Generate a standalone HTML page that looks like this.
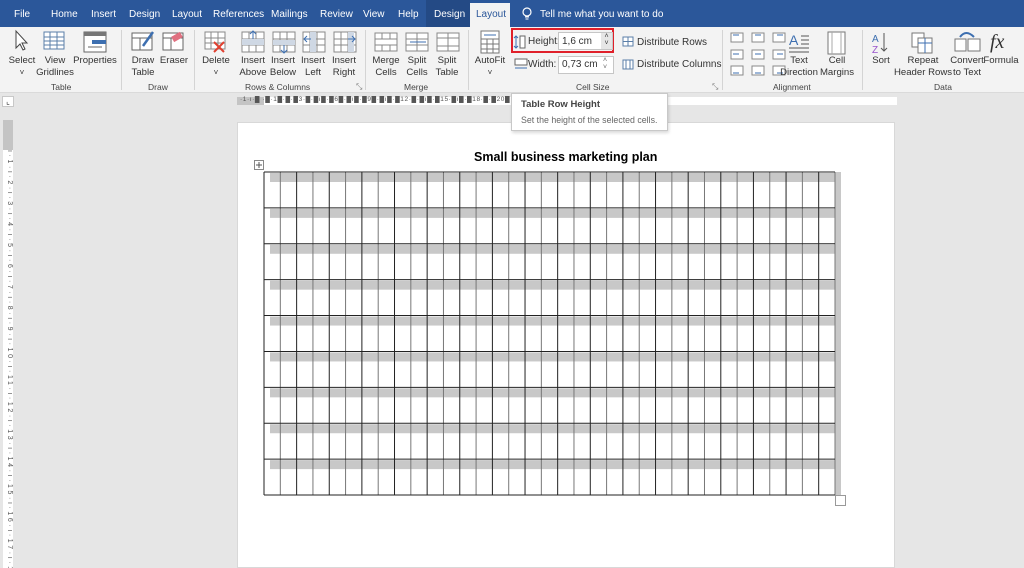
<!DOCTYPE html>
<html><head><meta charset="utf-8"><style>
*{margin:0;padding:0;box-sizing:border-box}
body{width:1024px;height:568px;overflow:hidden;background:#e6e6e6;font-family:"Liberation Sans",sans-serif;position:relative;font-size:10px;color:#333}
.a{position:absolute;white-space:nowrap}
.tab{position:absolute;top:9px;color:#fff;font-size:10px}
.lb{position:absolute;font-size:9.6px;color:#333;text-align:center;line-height:11.5px}
.gl{position:absolute;top:82px;font-size:8.5px;color:#444}
.sep{position:absolute;top:30px;width:1px;height:60px;background:#d4d4d4}
</style></head><body>
<div class="a" style="left:0;top:0;width:1024px;height:27px;background:#2b579a"></div>
<div class="a" style="left:426px;top:0;width:44px;height:27px;background:#244a85"></div>
<div class="a" style="left:470px;top:3px;width:40px;height:24px;background:#f3f3f3"></div>
<span class="tab" style="left:14px">File</span>
<span class="tab" style="left:51px">Home</span>
<span class="tab" style="left:91px">Insert</span>
<span class="tab" style="left:129px">Design</span>
<span class="tab" style="left:172px">Layout</span>
<span class="tab" style="left:213px">References</span>
<span class="tab" style="left:271px">Mailings</span>
<span class="tab" style="left:320px">Review</span>
<span class="tab" style="left:363px">View</span>
<span class="tab" style="left:398px">Help</span>
<span class="tab" style="left:434px">Design</span>
<span class="tab" style="left:476px;color:#2b579a">Layout</span>
<svg class="a" style="left:521px;top:7px" width="12" height="14"><circle cx="6" cy="5" r="4" fill="none" stroke="#fff" stroke-width="1.2"/><path d="M4 10h4M4.5 12h3" stroke="#fff"/></svg>
<span class="tab" style="left:540px">Tell me what you want to do</span>

<div class="a" style="left:0;top:27px;width:1024px;height:66px;background:#f3f3f3;border-bottom:1px solid #dadada"></div>
<div class="sep" style="left:121px"></div><div class="sep" style="left:194px"></div><div class="sep" style="left:365px"></div><div class="sep" style="left:468px"></div><div class="sep" style="left:722px"></div><div class="sep" style="left:862px"></div>

<svg class="a" style="left:0;top:28px" width="1024" height="52">
<path d="M16 3v17l4-4 3 6 2-1-3-6h5z" fill="#fff" stroke="#444"/>
<g fill="#fff" stroke="#5b7fa8"><rect x="44" y="4" width="20" height="17"/><path d="M44 9h20M44 13h20M44 17h20M50 4v17M57 4v17"/></g>
<g><rect x="84" y="4" width="22" height="20" fill="#fff" stroke="#666"/><rect x="84" y="4" width="22" height="4" fill="#777"/><rect x="92" y="12" width="14" height="4" fill="#3d6fb0"/><path d="M88 19h14" stroke="#666"/></g>
<g fill="#fff" stroke="#666"><rect x="132" y="5" width="20" height="17"/><path d="M132 10h20M140 10v12"/></g><path d="M143 18l10-14" stroke="#3d6fb0" stroke-width="2.5"/>
<g fill="#fff" stroke="#666"><rect x="163" y="5" width="20" height="17"/><path d="M163 10h20M171 10v12"/></g><rect x="172" y="6" width="10" height="6" fill="#e07080" transform="rotate(-30 177 9)"/>
<g fill="#fff" stroke="#888"><rect x="205" y="4" width="20" height="17"/><path d="M205 10h20M205 15h20M211 4v17M218 4v17"/></g><path d="M214 14l10 10M224 14l-10 10" stroke="#e04030" stroke-width="2"/>
<g fill="#fff" stroke="#888"><rect x="242" y="4" width="22" height="20"/><path d="M242 11h22M242 17h22M249 4v20M256 4v20"/></g><rect x="242" y="11" width="22" height="6" fill="#cfd8e4"/><path d="M253 3v8M250 6l3-3 3 3" stroke="#3d6fb0" fill="none"/>
<g fill="#fff" stroke="#888"><rect x="273" y="4" width="22" height="20"/><path d="M273 11h22M273 17h22M280 4v20M287 4v20"/></g><rect x="273" y="12" width="22" height="5" fill="#cfd8e4"/><path d="M284 17v8M281 22l3 3 3-3" stroke="#3d6fb0" fill="none"/>
<g fill="#fff" stroke="#888"><rect x="303" y="4" width="22" height="20"/><path d="M303 11h22M303 17h22M310 4v20M317 4v20"/></g><rect x="310" y="4" width="6" height="20" fill="#cfd8e4"/><path d="M305 11h6M307 8l-3 3 3 3" stroke="#3d6fb0" fill="none"/>
<g fill="#fff" stroke="#888"><rect x="334" y="4" width="22" height="20"/><path d="M334 11h22M334 17h22M341 4v20M348 4v20"/></g><rect x="348" y="4" width="6" height="20" fill="#cfd8e4"/><path d="M348 11h7M352 8l3 3-3 3" stroke="#3d6fb0" fill="none"/>
<g fill="#fff" stroke="#888"><rect x="375" y="5" width="22" height="18"/><path d="M375 11h22M375 17h22M382 5v6M390 5v6M382 17v6M390 17v6"/></g>
<g fill="#fff" stroke="#888"><rect x="406" y="5" width="22" height="18"/><path d="M406 11h22M406 17h22M417 5v18"/></g><path d="M410 14h16" stroke="#3d6fb0"/>
<g fill="#fff" stroke="#888"><rect x="437" y="5" width="22" height="18"/><path d="M437 10h22M437 18h22M448 5v18"/></g>
<g fill="#fff" stroke="#777"><rect x="481" y="3" width="18" height="22"/><path d="M481 11h18M481 16h18M481 21h18M487 11v14M493 11v14"/></g><path d="M484 7h12" stroke="#3d6fb0"/>
<path d="M516 8v12M514 10l2-2 2 2M514 18l2 2 2-2" stroke="#3d6fb0" fill="none"/><rect x="520" y="8" width="5" height="12" fill="#fff" stroke="#666"/>
<rect x="515" y="31" width="12" height="6" fill="#fff" stroke="#666"/><path d="M515 40h12" stroke="#3d6fb0"/>
<g fill="#fff" stroke="#5b7fa8"><rect x="623" y="9" width="10" height="9"/><path d="M623 13.5h10M628 9v9"/><rect x="623" y="32" width="10" height="9"/><path d="M626 32v9M630 32v9"/></g>
<g fill="#fff" stroke="#888"><rect x="731" y="5" width="12" height="9"/><rect x="752" y="5" width="12" height="9"/><rect x="773" y="5" width="12" height="9"/><rect x="731" y="22" width="12" height="9"/><rect x="752" y="22" width="12" height="9"/><rect x="773" y="22" width="12" height="9"/><rect x="731" y="38" width="12" height="9"/><rect x="752" y="38" width="12" height="9"/><rect x="773" y="38" width="12" height="9"/></g>
<g stroke="#3d6fb0"><path d="M733 7h6M755 7h6M777 7h6M733 26h6M755 26h6M777 26h6M733 45h6M755 45h6M777 45h6"/></g>
<text x="789" y="17" font-size="14" fill="#3d6fb0" font-family="Liberation Sans">A</text><path d="M801 8h8M801 12h8M801 16h8M789 20h20M789 24h20" stroke="#555"/>
<rect x="828" y="4" width="17" height="22" fill="#fff" stroke="#777"/><path d="M832 4v22M841 4v22" stroke="#aaa"/>
<text x="872" y="14" font-size="10" fill="#3d6fb0" font-family="Liberation Sans">A</text><text x="872" y="25" font-size="10" fill="#9955cc" font-family="Liberation Sans">Z</text><path d="M884 5v18M881 20l3 3 3-3" stroke="#555" fill="none"/>
<g fill="#fff" stroke="#777"><rect x="912" y="5" width="12" height="14"/><rect x="918" y="10" width="14" height="15"/></g><path d="M918 15h14M925 10v15" stroke="#3d6fb0"/>
<g fill="#fff" stroke="#777"><rect x="955" y="11" width="11" height="12"/><rect x="968" y="11" width="12" height="12"/></g><path d="M960 9q6-8 14 0" stroke="#3d6fb0" fill="none" stroke-width="2"/>
<text x="990" y="20" font-size="20" font-style="italic" fill="#333" font-family="Liberation Serif">fx</text>
</svg>

<div class="lb" style="left:4px;top:55px;width:36px">Select<br><span style="font-size:8px">˅</span></div>
<div class="lb" style="left:35px;top:55px;width:40px">View<br>Gridlines</div>
<div class="lb" style="left:72px;top:55px;width:46px">Properties</div>
<div class="lb" style="left:128px;top:55px;width:30px">Draw<br>Table</div>
<div class="lb" style="left:158px;top:55px;width:32px">Eraser</div>
<div class="lb" style="left:199px;top:55px;width:34px">Delete<br><span style="font-size:8px">˅</span></div>
<div class="lb" style="left:236px;top:55px;width:34px">Insert<br>Above</div>
<div class="lb" style="left:267px;top:55px;width:32px">Insert<br>Below</div>
<div class="lb" style="left:298px;top:55px;width:30px">Insert<br>Left</div>
<div class="lb" style="left:328px;top:55px;width:32px">Insert<br>Right</div>
<div class="lb" style="left:369px;top:55px;width:34px">Merge<br>Cells</div>
<div class="lb" style="left:402px;top:55px;width:30px">Split<br>Cells</div>
<div class="lb" style="left:432px;top:55px;width:30px">Split<br>Table</div>
<div class="lb" style="left:472px;top:55px;width:36px">AutoFit<br><span style="font-size:8px">˅</span></div>
<div class="gl" style="left:51px">Table</div><div class="gl" style="left:148px">Draw</div><div class="gl" style="left:245px">Rows &amp; Columns</div><div class="gl" style="left:404px">Merge</div><div class="gl" style="left:576px">Cell Size</div><div class="gl" style="left:773px">Alignment</div><div class="gl" style="left:934px">Data</div>
<span class="a" style="left:356px;top:82px;font-size:8px;color:#777">⤡</span><span class="a" style="left:712px;top:82px;font-size:8px;color:#777">⤡</span>

<div class="a" style="left:511px;top:28px;width:103px;height:25px;border:2px solid #e0202a"></div>
<span class="a" style="left:528px;top:36px">Height:</span>
<div class="a" style="left:558px;top:32px;width:55px;height:18px;background:#fff;border:1px solid #c6c6c6"></div>
<span class="a" style="left:562px;top:36px">1,6 cm</span>
<div class="a" style="left:601px;top:33px;width:11px;height:16px;background:#e6e6e6;font-size:7px;text-align:center;line-height:7px">˄<br>˅</div>
<span class="a" style="left:528px;top:59px">Width:</span>
<div class="a" style="left:558px;top:56px;width:56px;height:18px;background:#fff;border:1px solid #c6c6c6"></div>
<span class="a" style="left:562px;top:59px">0,73 cm</span>
<span class="a" style="left:603px;top:57px;font-size:7px;line-height:7px;color:#666">˄<br>˅</span>
<span class="a" style="left:637px;top:37px">Distribute Rows</span>
<span class="a" style="left:637px;top:59px">Distribute Columns</span>
<div class="lb" style="left:778px;top:55px;width:42px">Text<br>Direction</div>
<div class="lb" style="left:818px;top:55px;width:38px">Cell<br>Margins</div>
<div class="lb" style="left:868px;top:55px;width:26px">Sort</div>
<div class="lb" style="left:892px;top:55px;width:62px">Repeat<br>Header Rows</div>
<div class="lb" style="left:948px;top:55px;width:38px">Convert<br>to Text</div>
<div class="lb" style="left:982px;top:55px;width:38px">Formula</div>

<div class="a" style="left:2px;top:96px;width:12px;height:11px;background:#fff;border:1px solid #c8c8c8;font-size:8px;line-height:9px;text-align:center">⌞</div>
<div class="a" style="left:237px;top:97px;width:660px;height:8px;background:#fff"></div>
<div class="a" style="left:237px;top:97px;width:27px;height:8px;background:#c4c4c4"></div>
<div class="a" style="left:240px;top:96px;width:655px;font-size:6.5px;color:#555;letter-spacing:0.6px;overflow:hidden">·1·ı·█ ·█·1█·█·█3·█·█ı█·█6█·█ı█·█9█·█ı█·█12·█·█ı█·█15·█ı█·█18·█·█20█·█2·█2█·█·█25·█·26·ı·27·ı·28</div>
<div class="a" style="left:3px;top:120px;width:10px;height:448px;background:#fff"></div>
<div class="a" style="left:3px;top:120px;width:10px;height:30px;background:#c4c4c4"></div>
<div class="a" style="left:3px;top:150px;width:10px;height:418px;font-size:7px;color:#555;writing-mode:vertical-rl;letter-spacing:2.6px;overflow:hidden">ı·1·ı·2·ı·3·ı·4·ı·5·ı·6·ı·7·ı·8·ı·9·ı·10·ı·11·ı·12·ı·13·ı·14·ı·15·ı·16·ı·17·ı·18</div>

<div class="a" style="left:237px;top:122px;width:658px;height:446px;background:#fff;border:1px solid #d8d8d8"></div>
<div class="a" style="left:474px;top:150px;font-size:12.5px;font-weight:bold;color:#000">Small business marketing plan</div>
<svg class="a" style="left:250px;top:155px" width="20" height="20">
<rect x="4.5" y="5.5" width="9" height="9" fill="#fff" stroke="#888"/><path d="M9 7v6M6 10h6" stroke="#555"/>
</svg>
<svg class="a" style="left:260px;top:168px" width="600" height="345" id="tb"></svg>
<script>
var s='',x0=4,y0=4,W=571,H=323,R=9,C=35;
for(var r=0;r<R;r++){var y=y0+r*H/R;s+='<rect x="'+(x0+6)+'" y="'+(y+1)+'" width="'+(W-6)+'" height="9" fill="#c8c8c8"/>';}
s+='<rect x="'+(x0+W)+'" y="'+y0+'" width="6" height="'+H+'" fill="#c8c8c8"/>';
for(var c=0;c<=C;c++){var x=x0+c*W/C;s+='<line x1="'+x+'" y1="'+y0+'" x2="'+x+'" y2="'+(y0+H)+'" stroke="'+(c%2?'#777':'#222')+'" stroke-width="1"/>';}
for(var r=0;r<=R;r++){var y=y0+r*H/R;s+='<line x1="'+x0+'" y1="'+y+'" x2="'+(x0+W)+'" y2="'+y+'" stroke="#222"/>';}
s+='<rect x="'+(x0+W+0.5)+'" y="'+(y0+H+0.5)+'" width="10" height="10" fill="#fff" stroke="#999"/>';
document.getElementById('tb').innerHTML=s;
</script>

<div class="a" style="left:511px;top:93px;width:157px;height:38px;background:#fff;border:1px solid #c8c8c8;box-shadow:1px 2px 3px rgba(0,0,0,.15)"></div>
<span class="a" style="left:521px;top:99px;font-weight:bold;font-size:9.5px;color:#444">Table Row Height</span>
<span class="a" style="left:521px;top:115px;font-size:8.8px;color:#666">Set the height of the selected cells.</span>
</body></html>
